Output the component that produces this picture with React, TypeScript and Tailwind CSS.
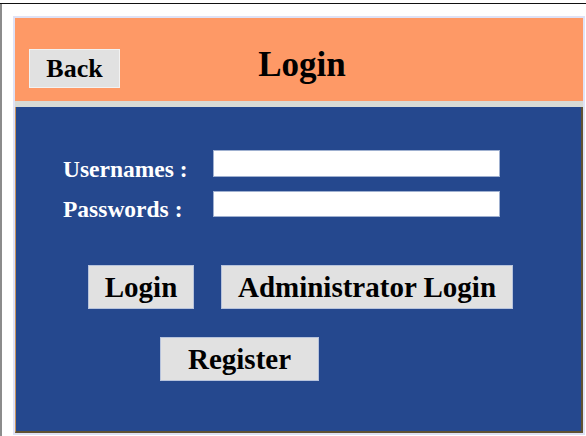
export default function App() {
  const btn =
    "h-[44px] flex items-center justify-center bg-[#e1e1e1] border border-[#b7c3dc] text-black text-[29px] font-bold leading-none";
  return (
    <div className="w-[586px] h-[436px] bg-white overflow-hidden flex flex-col font-[family-name:Liberation_Serif,Times_New_Roman,serif]">
      <div className="h-[3px] shrink-0" />
      <div className="h-[1px] bg-[#111111] shrink-0" />
      <div className="flex flex-1">
        <div className="w-[2px] bg-[#8c8c8c]" />
        <div className="pl-[11px] pt-[12px]">
          <div className="w-[572px] h-[419px] border-2 border-[#dfe2f6] flex flex-col">
            <div className="h-[83px] bg-[#fe9966] grid grid-cols-[1fr_auto_1fr] items-start pt-[31px] shrink-0">
              <div className="pl-[14px]">
                <button className="w-[91px] h-[39px] flex items-center justify-center bg-[#e1e1e1] border border-[#f2f2f2] text-black text-[26px] font-bold leading-[26px]">
                  Back
                </button>
              </div>
              <div className="text-[35px] font-bold leading-[35px] text-black pl-[6px] -mt-[2px]">
                Login
              </div>
              <div />
            </div>
            <div className="h-[6px] bg-[#d8dbd6] shrink-0" />
            <div className="flex-1 bg-[#25488e] border-l border-l-[#c8935c] border-r-2 border-r-[#5f5233] border-b-2 border-b-[#5f5233] pt-[43px] pl-[47px]">
              <div className="flex items-end">
                <div className="w-[150px] text-white text-[23.5px] font-bold leading-[16px] whitespace-nowrap">
                  Usernames :
                </div>
                <div className="w-[287px] h-[27px] bg-white border border-[#9fb0d0]" />
              </div>
              <div className="flex items-end mt-[14px]">
                <div className="w-[150px] text-white text-[23.5px] font-bold leading-[16px] whitespace-nowrap">
                  Passwords :
                </div>
                <div className="w-[287px] h-[26px] bg-white border border-[#9fb0d0]" />
              </div>
              <div className="flex gap-[27px] mt-[48px] pl-[25px]">
                <button className={`${btn} w-[106px]`}>Login</button>
                <button className={`${btn} w-[292px]`}>Administrator Login</button>
              </div>
              <div className="flex mt-[28px] pl-[97px]">
                <button className={`${btn} w-[159px]`}>Register</button>
              </div>
            </div>
          </div>
        </div>
      </div>
    </div>
  );
}
